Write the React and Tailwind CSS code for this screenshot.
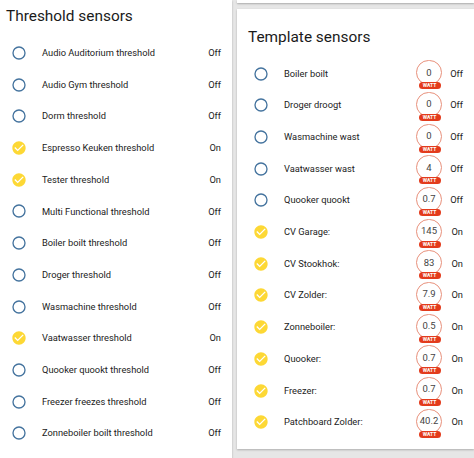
import React from 'react';

const thresholds = [
  ['Audio Auditorium threshold', false],
  ['Audio Gym threshold', false],
  ['Dorm threshold', false],
  ['Espresso Keuken threshold', true],
  ['Tester threshold', true],
  ['Multi Functional threshold', false],
  ['Boiler boilt threshold', false],
  ['Droger threshold', false],
  ['Wasmachine threshold', false],
  ['Vaatwasser threshold', true],
  ['Quooker quookt threshold', false],
  ['Freezer freezes threshold', false],
  ['Zonneboiler boilt threshold', false],
];

const templates = [
  ['Boiler boilt', '0', false],
  ['Droger droogt', '0', false],
  ['Wasmachine wast', '0', false],
  ['Vaatwasser wast', '4', false],
  ['Quooker quookt', '0.7', false],
  ['CV Garage:', '145', true],
  ['CV Stookhok:', '83', true],
  ['CV Zolder:', '7.9', true],
  ['Zonneboiler:', '0.5', true],
  ['Quooker:', '0.7', true],
  ['Freezer:', '0.7', true],
  ['Patchboard Zolder:', '40.2', true],
];

function StateIcon({ on }) {
  return (
    <div className="w-[26px] flex justify-center shrink-0">
      {on ? (
        <svg viewBox="0 0 24 24" className="w-4 h-4">
          <path
            fill="#fdd835"
            d="M12 2C6.5 2 2 6.5 2 12S6.5 22 12 22 22 17.5 22 12 17.5 2 12 2M10 17L5 12L6.41 10.59L10 14.17L17.59 6.58L19 8L10 17Z"
          />
        </svg>
      ) : (
        <svg viewBox="0 0 24 24" className="w-4 h-4">
          <path
            fill="#44739e"
            d="M12,20A8,8 0 0,1 4,12A8,8 0 0,1 12,4A8,8 0 0,1 20,12A8,8 0 0,1 12,20M12,2A10,10 0 0,0 2,12A10,10 0 0,0 12,22A10,10 0 0,0 22,12A10,10 0 0,0 12,2Z"
          />
        </svg>
      )}
    </div>
  );
}

function Badge({ value }) {
  return (
    <div className="relative w-[26px] h-[25px] -mt-[2px] shrink-0 rounded-full border border-[#e8907b] flex items-center justify-center text-[9.5px] text-[#444]">
      {value}
      <span className="absolute top-[21px] left-[1.5px] w-[22px] h-[7px] rounded-full bg-[#e33b1c] text-white text-[5px] font-bold leading-[7px] text-center">
        WATT
      </span>
    </div>
  );
}

export default function App() {
  return (
    <div
      className="flex h-[458px] w-[474px] overflow-hidden bg-[#e6e6e6] text-[#222]"
      style={{ fontFamily: 'Roboto, "Noto Sans", sans-serif' }}
    >
      {/* left card, cut off at top and left */}
      <div className="-ml-[5px] w-[237px] shrink-0 bg-white shadow-[0_1px_2px_rgba(0,0,0,0.25)] px-[11px] pt-[3.7px]">
        <h2 className="text-[15.4px] leading-[24px] text-[#1a1a1a]">Threshold sensors</h2>
        <div className="mt-[9.5px]">
          {thresholds.map(([name, on]) => (
            <div key={name} className="flex items-center h-[31.7px] text-[9.3px]">
              <StateIcon on={on} />
              <span className="ml-[10px] flex-1">{name}</span>
              <span>{on ? 'On' : 'Off'}</span>
            </div>
          ))}
        </div>
      </div>

      <div className="ml-[5px] w-[237px] shrink-0 flex flex-col">
        <div className="h-[3px] bg-white shadow-[0_1px_2px_rgba(0,0,0,0.25)]" />
        <div className="mt-[6px] bg-white shadow-[0_1px_2px_rgba(0,0,0,0.25)] px-[11px] pt-[16px] pb-[10.8px]">
          <h2 className="text-[15.4px] leading-[24px] text-[#1a1a1a]">Template sensors</h2>
          <div className="mt-[8.8px]">
            {templates.map(([name, value, on]) => (
              <div key={name} className="flex items-center h-[31.7px] text-[9.3px]">
                <StateIcon on={on} />
                <span className="ml-[10px] flex-1">{name}</span>
                <Badge value={value} />
                <span className="w-[21px] text-right">{on ? 'On' : 'Off'}</span>
              </div>
            ))}
          </div>
        </div>
      </div>
    </div>
  );
}
